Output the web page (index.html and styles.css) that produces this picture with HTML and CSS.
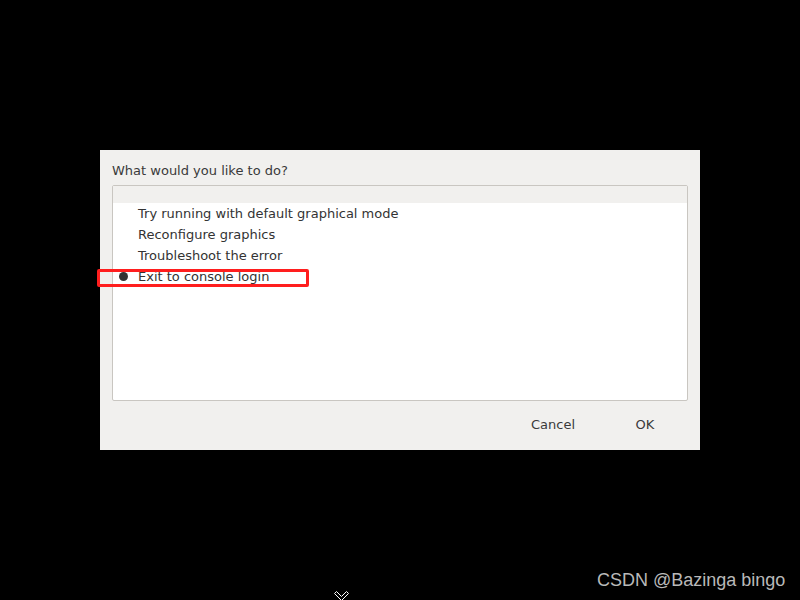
FILE: index.html
```html
<!DOCTYPE html>
<html>
<head>
<meta charset="utf-8">
<link rel="stylesheet" href="styles.css">
</head>
<body>
<div class="screen">
  <div class="dialog">
    <div class="title">What would you like to do?</div>
    <div class="listbox">
      <div class="list-header"></div>
      <div class="row"><span class="mark"></span><span class="label">Try running with default graphical mode</span></div>
      <div class="row"><span class="mark"></span><span class="label">Reconfigure graphics</span></div>
      <div class="row"><span class="mark"></span><span class="label">Troubleshoot the error</span></div>
      <div class="row"><span class="mark on"></span><span class="label">Exit to console login</span></div>
    </div>
    <div class="buttons">
      <div class="btn">Cancel</div>
      <div class="btn">OK</div>
    </div>
  </div>
  <div class="highlight"></div>
  <svg class="cursor" width="18" height="11" viewBox="0 0 18 11">
    <polygon points="1.5,2.5 3.5,0.5 8.5,5.5 13.5,0.5 15.5,2.5 8.5,9.5" fill="#000" stroke="#fff" stroke-width="1"/>
  </svg>
  <div class="watermark">CSDN @Bazinga bingo</div>
</div>
</body>
</html>
```
FILE: styles.css
```css
html, body {
  margin: 0;
  padding: 0;
  background: #000;
}
.screen {
  position: relative;
  width: 800px;
  height: 600px;
  overflow: hidden;
  padding: 150px 0 0 100px;
  box-sizing: border-box;
  font-family: "DejaVu Sans", sans-serif;
}
.dialog {
  width: 600px;
  height: 300px;
  box-sizing: border-box;
  background: #f1f0ee;
  padding: 12px 12px 12px 12px;
  display: flex;
  flex-direction: column;
}
.title {
  font-size: 13px;
  line-height: 16px;
  color: #3a3a3a;
  margin-top: 1px;
  height: 16px;
}
.listbox {
  margin-top: 6px;
  height: 216px;
  box-sizing: border-box;
  border: 1px solid #c9c6c1;
  border-radius: 2px;
  background: #fff;
  display: flex;
  flex-direction: column;
}
.list-header {
  height: 17px;
  background: #f1f0ee;
  flex: none;
}
.row {
  height: 21px;
  display: flex;
  align-items: center;
  font-size: 13px;
  color: #333;
}
.mark {
  width: 9px;
  height: 9px;
  margin-left: 6px;
  margin-right: 10px;
  border-radius: 50%;
}
.mark.on {
  background: #333;
}
.label {
  line-height: 16px;
}
.buttons {
  margin-top: 9px;
  height: 28px;
  display: flex;
  justify-content: flex-end;
  gap: 6px;
}
.btn {
  width: 86px;
  height: 28px;
  display: flex;
  align-items: center;
  justify-content: center;
  font-size: 13px;
  color: #3a3a3a;
}
.highlight {
  position: absolute;
  left: 97px;
  top: 269px;
  width: 212px;
  height: 18px;
  box-sizing: border-box;
  border: 3px solid #ff1e1e;
  border-radius: 2px;
}
.cursor {
  position: absolute;
  left: 333px;
  top: 591px;
}
.watermark {
  position: absolute;
  left: 597px;
  top: 569px;
  font-family: "Liberation Sans", sans-serif;
  font-size: 18px;
  line-height: 22px;
  color: #b9b9b9;
  white-space: nowrap;
}
```
